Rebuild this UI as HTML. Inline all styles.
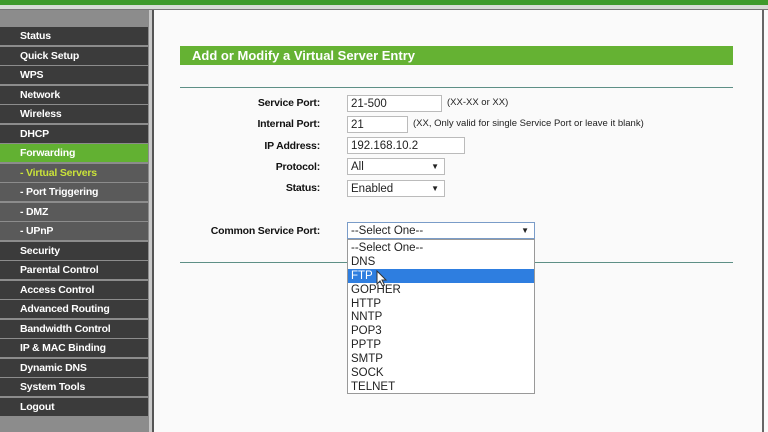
<!DOCTYPE html>
<html><head><style>
*{margin:0;padding:0;box-sizing:border-box}
body{width:768px;height:432px;overflow:hidden;background:#fafafa;font-family:"Liberation Sans",Arial,sans-serif;position:relative}
.topg{position:absolute;left:0;top:0;width:768px;height:5px;background:#3f9b2c}
.topl{position:absolute;left:0;top:5px;width:768px;height:4px;background:#d8dcd6}
.topd{position:absolute;left:0;top:9px;width:768px;height:1px;background:#777}
.side{position:absolute;left:0;top:10px;width:149px;height:422px;background:#8c8c8c}
.sl1{position:absolute;left:149px;top:10px;width:3px;height:422px;background:#c8c8c8}
.sl2{position:absolute;left:152px;top:10px;width:2px;height:422px;background:#555}
.rb{position:absolute;left:762px;top:10px;width:2px;height:422px;background:#666}
.it{position:absolute;left:0;width:148px;height:18px;background:#3b3b3b;color:#fff;font-size:10.5px;font-weight:bold;line-height:18px;padding-left:20px;letter-spacing:-0.2px}
.it.sub{background:#5a5a5a}
.it.act{background:#62b132}
.it.vs{color:#c9e23a}
.hdr{position:absolute;left:180px;top:46px;width:553px;height:19px;background:#65b233;color:#fff;font-size:13px;font-weight:bold;line-height:19px;padding-left:12px}
.hr{position:absolute;left:180px;width:553px;height:1px;background:#5d8f86}
.lb{position:absolute;right:448px;font-size:10.5px;font-weight:bold;color:#111;letter-spacing:-0.2px}
.in{position:absolute;left:347px;height:17px;background:#fff;border:1px solid #bbb;font-size:11.5px;line-height:16px;padding-left:3px;color:#222}
.ar{position:absolute;right:5px;top:0;font-size:8px}
.note{position:absolute;font-size:9.5px;color:#222}
.list{position:absolute;left:347px;top:239px;width:188px;height:155px;background:#fff;border:1px solid #999;font-size:11.5px;color:#222;padding-top:1px}
.list div{height:13.9px;line-height:14px;padding-left:3px}
.list .hl{background:#2e7ee0;color:#fff}
</style></head><body>
<div class="topg"></div><div class="topl"></div><div class="topd"></div>
<div class="side"></div><div class="sl1"></div><div class="sl2"></div><div class="rb"></div>
<div class="it" style="top:27px">Status</div>
<div class="it" style="top:46.5px">Quick Setup</div>
<div class="it" style="top:66px">WPS</div>
<div class="it" style="top:85.5px">Network</div>
<div class="it" style="top:105px">Wireless</div>
<div class="it" style="top:124.5px">DHCP</div>
<div class="it act" style="top:144px">Forwarding</div>
<div class="it sub vs" style="top:163.5px">- Virtual Servers</div>
<div class="it sub" style="top:183px">- Port Triggering</div>
<div class="it sub" style="top:202.5px">- DMZ</div>
<div class="it sub" style="top:222px">- UPnP</div>
<div class="it" style="top:241.5px">Security</div>
<div class="it" style="top:261px">Parental Control</div>
<div class="it" style="top:280.5px">Access Control</div>
<div class="it" style="top:300px">Advanced Routing</div>
<div class="it" style="top:319.5px">Bandwidth Control</div>
<div class="it" style="top:339px">IP &amp; MAC Binding</div>
<div class="it" style="top:358.5px">Dynamic DNS</div>
<div class="it" style="top:378px">System Tools</div>
<div class="it" style="top:397.5px">Logout</div>

<div class="hdr">Add or Modify a Virtual Server Entry</div>
<div class="hr" style="top:87px"></div>
<div class="hr" style="top:262px"></div>

<div class="lb" style="top:97px">Service Port:</div>
<div class="in" style="top:95px;width:95px">21-500</div>
<div class="note" style="left:447px;top:97px">(XX-XX or XX)</div>
<div class="lb" style="top:118px">Internal Port:</div>
<div class="in" style="top:116px;width:61px">21</div>
<div class="note" style="left:413px;top:118px">(XX, Only valid for single Service Port or leave it blank)</div>
<div class="lb" style="top:140px">IP Address:</div>
<div class="in" style="top:137px;width:118px">192.168.10.2</div>
<div class="lb" style="top:161px">Protocol:</div>
<div class="in" style="top:158px;width:98px">All<span class="ar">▼</span></div>
<div class="lb" style="top:182px">Status:</div>
<div class="in" style="top:180px;width:98px">Enabled<span class="ar">▼</span></div>
<div class="lb" style="top:225px">Common Service Port:</div>
<div class="in" style="top:222px;width:188px;border-color:#7a9cc8">--Select One--<span class="ar">▼</span></div>
<div class="list">
<div>--Select One--</div><div>DNS</div><div class="hl">FTP</div><div>GOPHER</div><div>HTTP</div><div>NNTP</div><div>POP3</div><div>PPTP</div><div>SMTP</div><div>SOCK</div><div>TELNET</div>
</div>
<svg style="position:absolute;left:376px;top:270px" width="12" height="18" viewBox="0 0 12 18"><path d="M1 1 L1 14 L4 11 L6.5 16 L8.5 15 L6 10 L10 10 Z" fill="#fff" stroke="#333" stroke-width="1"/></svg>
</body></html>
